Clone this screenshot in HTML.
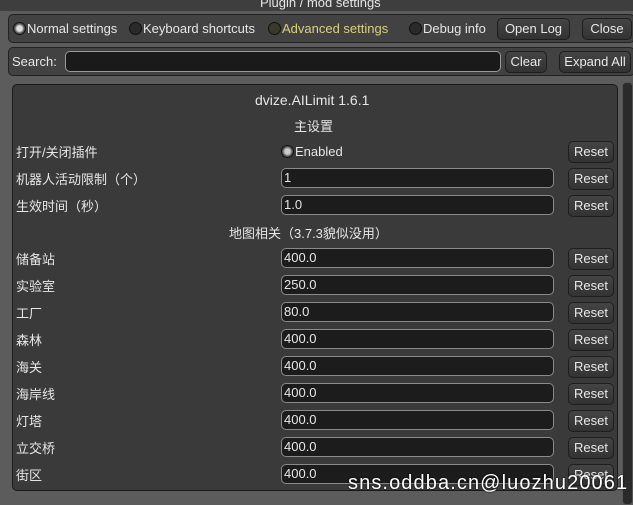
<!DOCTYPE html><html><head><meta charset="utf-8"><style>
*{box-sizing:border-box;margin:0;padding:0}
body{width:633px;height:505px;overflow:hidden;background:#5c5c5c;font-family:"Liberation Sans","Noto Sans CJK SC",sans-serif;font-size:13px;color:#e6e6e6;position:relative}
.a{position:absolute;white-space:nowrap}
.bar{position:absolute;border:1px solid #222;border-radius:5px;background:#424242}
.btn{position:absolute;height:22px;border:1px solid #1e1e1e;border-radius:5px;background:linear-gradient(#444,#333);color:#e8e8e8;text-align:center;line-height:20px}
.rad{display:inline-block;width:13px;height:13px;border-radius:50%;background:#2a2a2a;border:1px solid #111;vertical-align:-2px;margin-right:1px}
.inp{position:absolute;left:281px;width:273px;height:20px;border:1px solid #8a8a8a;border-radius:5px;background:#1c1c1c;line-height:18px;padding-left:2px}
.lab{position:absolute;left:16px;margin-top:-2px}
</style></head><body>
<div class="a" style="left:0;top:0;width:633px;height:11px;background:#3e3e3e"></div>
<div class="a" style="left:260px;top:-5px;font-size:13px">Plugin / mod settings</div>
<div class="bar" style="left:8px;top:14px;width:627px;height:29px"></div>
<div class="a" style="left:13px;top:21px"><span class="rad" style="background:radial-gradient(#ddd 35%,#555 60%)"></span>Normal settings</div>
<div class="a" style="left:129px;top:21px"><span class="rad"></span>Keyboard shortcuts</div>
<div class="a" style="left:268px;top:21px;color:#d8cf80"><span class="rad" style="background:#3a3a2a"></span>Advanced settings</div>
<div class="a" style="left:409px;top:21px"><span class="rad"></span>Debug info</div>
<div class="btn" style="left:497px;top:18px;width:73px">Open Log</div>
<div class="btn" style="left:582px;top:18px;width:50px">Close</div>
<div class="bar" style="left:8px;top:47px;width:627px;height:29px"></div>
<div class="a" style="left:12px;top:54px">Search:</div>
<div class="a" style="left:65px;top:51px;width:436px;height:21px;border:1px solid #9a9a9a;border-radius:5px;background:#1a1a1a"></div>
<div class="btn" style="left:505px;top:51px;width:42px">Clear</div>
<div class="btn" style="left:559px;top:51px;width:72px">Expand All</div>
<div class="a" style="left:12px;top:84px;width:606px;height:407px;background:#3a3a3a;border:1px solid #1a1a1a;border-radius:5px"></div>
<div class="a" style="left:622px;top:82px;width:11px;height:423px;background:#2a2a2a;border:1px solid #555;border-radius:4px"></div>
<div class="a" style="left:255px;top:92px;font-size:14px">dvize.AILimit 1.6.1</div>
<div class="a" style="left:294px;top:116px">主设置</div>
<div class="lab" style="top:144px">打开/关闭插件</div>
<div class="a" style="left:281px;top:144px"><span class="rad" style="background:radial-gradient(#ccc 35%,#555 60%)"></span>Enabled</div>
<div class="lab" style="top:171px">机器人活动限制（个）</div><div class="inp" style="top:168px">1</div>
<div class="lab" style="top:198px">生效时间（秒）</div><div class="inp" style="top:195px">1.0</div>
<div class="a" style="left:229px;top:223px">地图相关（3.7.3貌似没用）</div>
<div class="lab" style="top:251px">储备站</div><div class="inp" style="top:248px">400.0</div>
<div class="lab" style="top:278px">实验室</div><div class="inp" style="top:275px">250.0</div>
<div class="lab" style="top:305px">工厂</div><div class="inp" style="top:302px">80.0</div>
<div class="lab" style="top:332px">森林</div><div class="inp" style="top:329px">400.0</div>
<div class="lab" style="top:359px">海关</div><div class="inp" style="top:356px">400.0</div>
<div class="lab" style="top:386px">海岸线</div><div class="inp" style="top:383px">400.0</div>
<div class="lab" style="top:413px">灯塔</div><div class="inp" style="top:410px">400.0</div>
<div class="lab" style="top:440px">立交桥</div><div class="inp" style="top:437px">400.0</div>
<div class="lab" style="top:467px">街区</div><div class="inp" style="top:464px">400.0</div>
<div class="btn" style="left:568px;top:141px;width:46px">Reset</div>
<div class="btn" style="left:568px;top:168px;width:46px">Reset</div>
<div class="btn" style="left:568px;top:195px;width:46px">Reset</div>
<div class="btn" style="left:568px;top:248px;width:46px">Reset</div>
<div class="btn" style="left:568px;top:275px;width:46px">Reset</div>
<div class="btn" style="left:568px;top:302px;width:46px">Reset</div>
<div class="btn" style="left:568px;top:329px;width:46px">Reset</div>
<div class="btn" style="left:568px;top:356px;width:46px">Reset</div>
<div class="btn" style="left:568px;top:383px;width:46px">Reset</div>
<div class="btn" style="left:568px;top:410px;width:46px">Reset</div>
<div class="btn" style="left:568px;top:437px;width:46px">Reset</div>
<div class="btn" style="left:568px;top:464px;width:46px">Reset</div>
<div class="a" style="left:348px;top:472px;font-size:20px;letter-spacing:1.1px;color:#fff;text-shadow:0 0 2px #000">sns.oddba.cn@luozhu20061</div>
</body></html>
